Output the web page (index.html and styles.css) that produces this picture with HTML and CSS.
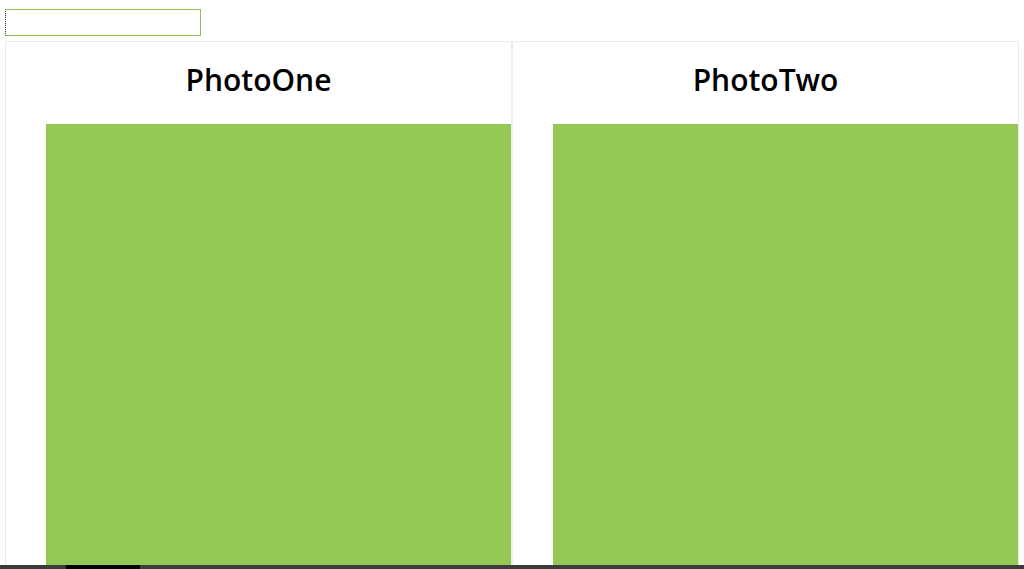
FILE: index.html
```html
<!DOCTYPE html>
<html>
<head>
<meta charset="utf-8">
<link rel="stylesheet" href="styles.css">
</head>
<body>
<div class="search"></div>
<div class="panels">
  <div class="panel panel-left">
    <h2 class="title">PhotoOne</h2>
    <div class="photo-wrap"><div class="photo"></div></div>
  </div>
  <div class="panel">
    <h2 class="title">PhotoTwo</h2>
    <div class="photo-wrap"><div class="photo"></div></div>
  </div>
</div>
<div class="scrollbar"><div class="thumb"></div></div>
</body>
</html>
```
FILE: styles.css
```css
html, body {
  margin: 0;
  padding: 0;
  background: #ffffff;
  overflow: hidden;
  font-family: "Open Sans", "Noto Sans", sans-serif;
}
.search {
  margin: 9px 0 0 5px;
  width: 196px;
  height: 27px;
  box-sizing: border-box;
  border: 1px solid #8cc350;
  border-left: 1px dotted #333;
}
.panels {
  margin: 5px 0 0 5px;
  width: 1014px;
  box-sizing: border-box;
  border: 1px solid #ebebeb;
  border-bottom: none;
  display: flex;
}
.panel {
  flex: 1;
  display: flex;
  flex-direction: column;
}
.panel-left {
  border-right: 2px solid #e9edf0;
}
.title {
  margin: 0;
  padding: 17px 0 24px;
  text-align: center;
  font-size: 30px;
  font-weight: 600;
  color: #000;
  line-height: normal;
}
.photo-wrap {
  padding-left: 40px;
}
.photo {
  height: 460px;
  background: #95c754;
}
.scrollbar {
  position: fixed;
  left: 0;
  right: 0;
  bottom: 0;
  height: 4px;
  background: #3b3b3b;
}
.thumb {
  margin-left: 66px;
  width: 74px;
  height: 4px;
  background: #000;
}
```
